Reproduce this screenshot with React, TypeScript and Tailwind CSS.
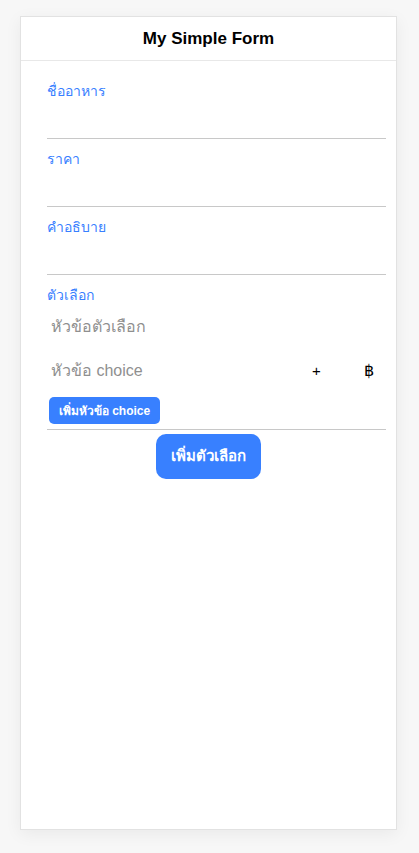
import React from 'react';

const Field: React.FC<{ label: string }> = ({ label }) => (
    <div className="h-[68px] border-b border-[#c8c8c8] flex flex-col">
        <label className="mt-[10px] text-[14px] leading-5 text-[#3880ff]">{label}</label>
        <input className="flex-1 outline-none bg-transparent text-[16px]" />
    </div>
);

export default function App() {
    return (
        <div className="min-h-[853px] bg-[#f7f7f7] pt-4 pl-5 pb-6" style={{ fontFamily: '"Liberation Sans", "Noto Sans", sans-serif' }}>
            <div className="w-[377px] h-[814px] bg-white border border-[#e2e2e2] shadow-[0_4px_16px_rgba(0,0,0,0.06)] flex flex-col">
                <div className="h-[44px] border-b border-[#e8e8e8] flex items-center justify-center">
                    <h1 className="text-[17px] font-bold text-black">My Simple Form</h1>
                </div>
                <div className="pl-[26px] pr-[10px] pt-[10px] flex flex-col">
                    <Field label="ชื่ออาหาร" />
                    <Field label="ราคา" />
                    <Field label="คำอธิบาย" />
                    <div className="border-b border-[#c8c8c8] pb-[5px]">
                        <div className="mt-[10px] text-[14px] leading-5 text-[#3880ff]">ตัวเลือก</div>
                        <div className="h-[44px] flex items-center pl-1">
                            <input placeholder="หัวข้อตัวเลือก" className="w-full outline-none text-[16px] placeholder:text-[#8f8f8f]" />
                        </div>
                        <div className="h-[44px] flex items-center pl-1">
                            <input placeholder="หัวข้อ choice" className="flex-1 min-w-0 outline-none text-[16px] placeholder:text-[#8f8f8f]" />
                            <span className="w-[52px] text-[15px] text-black">+</span>
                            <span className="w-[22px] text-[16px] text-black">฿</span>
                        </div>
                        <button className="ml-[2px] mt-[4px] h-[27px] w-[111px] rounded-[5px] bg-[#3880ff] text-white text-[12px] font-bold">
                            เพิ่มหัวข้อ choice
                        </button>
                    </div>
                </div>
                <div className="flex justify-center mt-[4px]">
                    <button className="h-[45px] w-[105px] rounded-[10px] bg-[#3880ff] text-white text-[15px] font-bold">
                        เพิ่มตัวเลือก
                    </button>
                </div>
            </div>
        </div>
    );
}
